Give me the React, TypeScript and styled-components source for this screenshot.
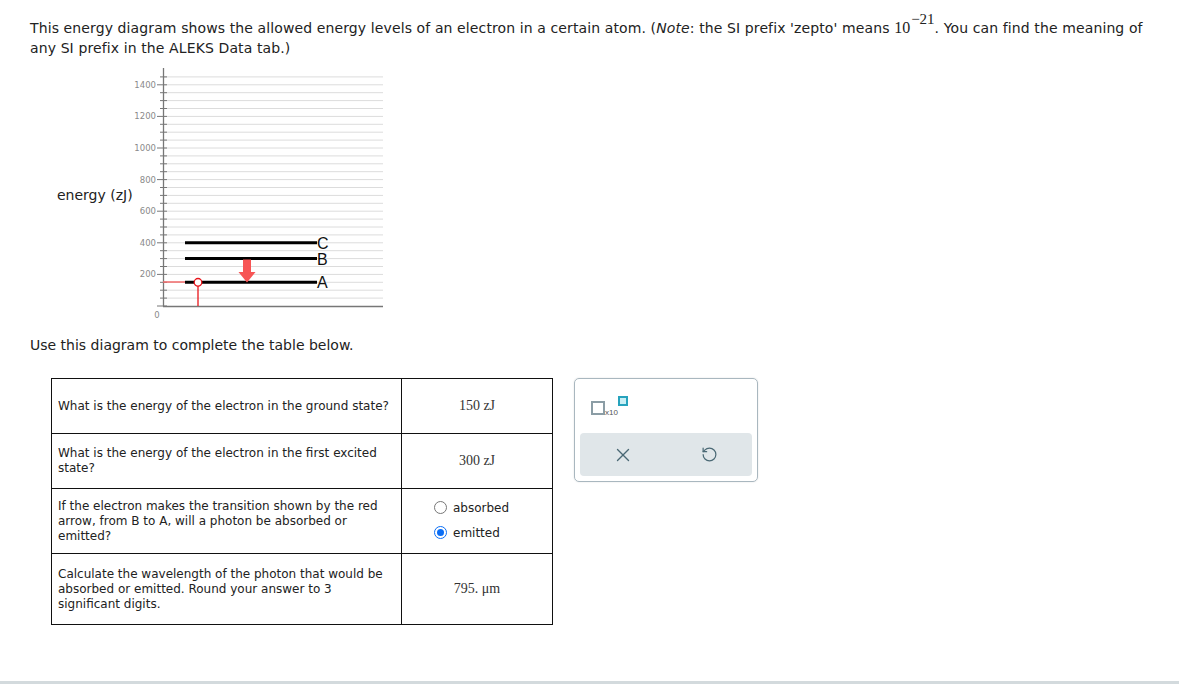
import React from "react";
import styled, { createGlobalStyle } from "styled-components";
import { X, RotateCcw } from "lucide-react";

const Global = createGlobalStyle`
  html, body { margin: 0; padding: 0; background: #fff; }
  body { font-family: "DejaVu Sans", Verdana, sans-serif; color: #222; }
`;

const Page = styled.div`
  height: 684px;
  display: flex;
  flex-direction: column;
`;

const Content = styled.div`
  flex: 1;
  padding: 18px 0 0 30px;
`;

const Footer = styled.div`
  height: 3px;
  background: #d3dadd;
`;

const Intro = styled.p`
  margin: 0;
  font-size: 14px;
  line-height: 20px;
  letter-spacing: 0.11px;
  color: #222;
`;

const Ten = styled.span`
  font-family: "Liberation Serif", "Times New Roman", serif;
  font-size: 16px;
  letter-spacing: 0;
`;

const Sup = styled.sup`
  font-family: "Liberation Serif", "Times New Roman", serif;
  font-size: 15px;
  letter-spacing: 0;
  position: relative;
  top: -9px;
  margin-left: 1px;
  vertical-align: baseline;
  line-height: 0;
`;

const Chart = styled.svg`
  display: block;
  margin: 7px 0 0 20px;
`;

const Lead = styled.p`
  margin: 10px 0 0 0;
  font-size: 14px;
  line-height: 20px;
`;

const Row = styled.div`
  display: flex;
  align-items: flex-start;
  margin-top: 23px;
  margin-left: 21px;
  gap: 21px;
`;

const Table = styled.table`
  border-collapse: collapse;
  width: 502px;
`;

const Tr = styled.tr<{ $h: number }>`
  height: ${(p) => p.$h}px;
`;

const Q = styled.td`
  width: 337px;
  border: 1px solid #111;
  padding: 0 6px;
  font-size: 12px;
  line-height: 15px;
  color: #222;
  vertical-align: middle;
`;

const A = styled.td`
  border: 1px solid #111;
  text-align: center;
  vertical-align: middle;
  font-family: "Liberation Serif", "Times New Roman", serif;
  font-size: 14px;
  color: #333;
`;

const Choices = styled.div`
  display: flex;
  flex-direction: column;
  gap: 11px;
  padding: 0 0 2px 31px;
  text-align: left;
`;

const Choice = styled.label`
  display: flex;
  align-items: center;
  gap: 6px;
  font-family: "DejaVu Sans", Verdana, sans-serif;
  font-size: 12px;
  color: #222;
`;

const Radio = styled.span<{ $on?: boolean }>`
  width: 11px;
  height: 11px;
  border-radius: 50%;
  border: 1px solid ${(p) => (p.$on ? "#0b6ef5" : "#777")};
  background: #fff;
  display: inline-flex;
  align-items: center;
  justify-content: center;
  &::after {
    content: "";
    width: 7px;
    height: 7px;
    border-radius: 50%;
    background: ${(p) => (p.$on ? "#0b6ef5" : "transparent")};
  }
`;

const Tool = styled.div`
  width: 172px;
  height: 97px;
  border: 1px solid #a9b7bf;
  border-radius: 5px;
  box-shadow: 0 0 2px rgba(0, 0, 0, 0.12);
  padding: 0 5px 5px 5px;
  box-sizing: content-box;
  display: flex;
  flex-direction: column;
`;

const Widget = styled.div`
  height: 54px;
  display: flex;
  align-items: flex-start;
  padding: 17px 0 0 11px;
  box-sizing: border-box;
`;

const Box = styled.span`
  width: 10px;
  height: 10px;
  border: 2px solid #8b9da5;
  margin-top: 5px;
`;

const X10 = styled.span`
  font-family: "Liberation Sans", Arial, sans-serif;
  font-size: 8px;
  color: #555;
  margin-top: 12px;
`;

const SupBox = styled.span`
  width: 6px;
  height: 6px;
  border: 2px solid #27a3bd;
  background: #c9eff5;
  margin-left: 0px;
  margin-top: 0px;
`;

const Bar = styled.div`
  flex: 1;
  display: flex;
  background: #e0e6e9;
  border-radius: 4px;
`;

const Btn = styled.button`
  flex: 1;
  border: none;
  background: transparent;
  display: flex;
  align-items: center;
  justify-content: center;
  color: #4a6874;
  padding: 0;
`;

const Y = (v: number) => 306 - v * 0.158;

function EnergyChart() {
  const grid: number[] = [];
  for (let v = 50; v <= 1450; v += 50) grid.push(v);
  const ticks: number[] = [];
  for (let v = 0; v <= 1450; v += 50) ticks.push(v);
  const labels = [200, 400, 600, 800, 1000, 1200, 1400];
  const levels = [
    { v: 400, n: "C" },
    { v: 300, n: "B" },
    { v: 150, n: "A" },
  ];
  return (
    <Chart width={340} height={260} viewBox="50 65 340 260">
      <text x={57} y={200} fontSize={14} fontFamily='"DejaVu Sans", Verdana, sans-serif' fill="#222">
        energy (zJ)
      </text>
      {grid.map((v) => (
        <line key={v} x1={164} x2={383} y1={Y(v)} y2={Y(v)} stroke="#dcdcdc" strokeWidth={1} />
      ))}
      {ticks.map((v) => (
        <line
          key={"t" + v}
          x1={v % 200 === 0 ? 157 : 160}
          x2={167}
          y1={Y(v)}
          y2={Y(v)}
          stroke="#777"
          strokeWidth={1}
        />
      ))}
      <line x1={163.5} x2={163.5} y1={68} y2={306.5} stroke="#777" strokeWidth={1.3} />
      <line x1={163} x2={383} y1={306.5} y2={306.5} stroke="#777" strokeWidth={1.3} />
      {labels.map((v) => (
        <text
          key={"l" + v}
          x={156}
          y={Y(v) + 3}
          textAnchor="end"
          fontSize={8.5}
          fontFamily='"DejaVu Sans", Verdana, sans-serif'
          fill="#8a8a8a"
        >
          {v}
        </text>
      ))}
      <text x={157} y={318} textAnchor="middle" fontSize={8.5} fontFamily='"DejaVu Sans", Verdana, sans-serif' fill="#8a8a8a">
        0
      </text>
      <line x1={163} x2={186} y1={282} y2={282} stroke="#f26a6a" strokeWidth={1.5} />
      {levels.map((l) => (
        <g key={l.n}>
          <line x1={185} x2={317} y1={Y(l.v)} y2={Y(l.v)} stroke="#000" strokeWidth={3} />
          <text x={317} y={Y(l.v) + 6} fontSize={16} fontFamily='"Liberation Sans", Arial, sans-serif' fill="#111">
            {l.n}
          </text>
        </g>
      ))}
      <line x1={198} x2={198} y1={286} y2={306} stroke="#e8141a" strokeWidth={1.3} />
      <circle cx={198} cy={282.3} r={3.8} fill="#fff" stroke="#e8141a" strokeWidth={1.3} />
      <polygon
        points="243,259.5 251,259.5 251,272 255.5,272 247,282.5 238.5,272 243,272"
        fill="#f75555"
      />
    </Chart>
  );
}

export default function App() {
  return (
    <Page>
      <Global />
      <Content>
        <Intro>
          This energy diagram shows the allowed energy levels of an electron in a certain atom. (<i>Note</i>: the SI
          prefix 'zepto' means <Ten>10</Ten>
          <Sup>−21</Sup>. You can find the meaning of
          <br />
          any SI prefix in the ALEKS Data tab.)
        </Intro>
        <EnergyChart />
        <Lead>Use this diagram to complete the table below.</Lead>
        <Row>
          <Table>
            <tbody>
              <Tr $h={55}>
                <Q>What is the energy of the electron in the ground state?</Q>
                <A>150 zJ</A>
              </Tr>
              <Tr $h={55}>
                <Q>What is the energy of the electron in the first excited state?</Q>
                <A>300 zJ</A>
              </Tr>
              <Tr $h={65}>
                <Q>If the electron makes the transition shown by the red arrow, from B to A, will a photon be absorbed or emitted?</Q>
                <A>
                  <Choices>
                    <Choice>
                      <Radio />
                      absorbed
                    </Choice>
                    <Choice>
                      <Radio $on />
                      emitted
                    </Choice>
                  </Choices>
                </A>
              </Tr>
              <Tr $h={71}>
                <Q>Calculate the wavelength of the photon that would be absorbed or emitted. Round your answer to 3 significant digits.</Q>
                <A>795. μm</A>
              </Tr>
            </tbody>
          </Table>
          <Tool>
            <Widget>
              <Box />
              <X10>x10</X10>
              <SupBox />
            </Widget>
            <Bar>
              <Btn aria-label="clear">
                <X size={22} strokeWidth={1.5} />
              </Btn>
              <Btn aria-label="undo">
                <RotateCcw size={17} strokeWidth={1.7} />
              </Btn>
            </Bar>
          </Tool>
        </Row>
      </Content>
      <Footer />
    </Page>
  );
}
